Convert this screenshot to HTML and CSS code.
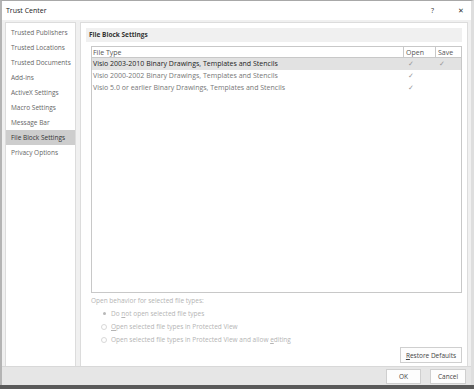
FILE: index.html
```html
<html>
  <head>
    <link rel="stylesheet" href="styles.css">
  </head>
  <body>
    <div class="dialog">
      <div class="titlebar">
        <span class="title">Trust Center</span>
        <span class="help">?</span>
        <span class="close">&#x2715;</span>
      </div>
      <div class="main">
        <div class="nav">
          <div class="nav-item">Trusted Publishers</div>
          <div class="nav-item">Trusted Locations</div>
          <div class="nav-item">Trusted Documents</div>
          <div class="nav-item">Add-ins</div>
          <div class="nav-item">ActiveX Settings</div>
          <div class="nav-item">Macro Settings</div>
          <div class="nav-item">Message Bar</div>
          <div class="nav-item selected">File Block Settings</div>
          <div class="nav-item">Privacy Options</div>
        </div>
        <div class="content">
          <div class="section-head">File Block Settings</div>
          <div class="table">
            <div class="row head">
              <div class="cell type">File Type</div>
              <div class="cell open">Open</div>
              <div class="cell save">Save</div>
            </div>
            <div class="row active">
              <div class="cell type">Visio 2003-2010 Binary Drawings, Templates and Stencils</div>
              <div class="cell open"><span class="tick">&#x2713;</span></div>
              <div class="cell save"><span class="tick">&#x2713;</span></div>
            </div>
            <div class="row">
              <div class="cell type">Visio 2000-2002 Binary Drawings, Templates and Stencils</div>
              <div class="cell open"><span class="tick">&#x2713;</span></div>
              <div class="cell save"></div>
            </div>
            <div class="row">
              <div class="cell type">Visio 5.0 or earlier Binary Drawings, Templates and Stencils</div>
              <div class="cell open"><span class="tick">&#x2713;</span></div>
              <div class="cell save"></div>
            </div>
          </div>
          <div class="behavior">
            <div class="behavior-label">Open behavior for selected file types:</div>
            <div class="radio"><span class="dot checked"></span><span>Do <u>n</u>ot open selected file types</span></div>
            <div class="radio"><span class="dot"></span><span><u>O</u>pen selected file types in Protected View</span></div>
            <div class="radio"><span class="dot"></span><span>Open selected file types in Protected View and allow <u>e</u>diting</span></div>
          </div>
          <div class="restore-row">
            <button class="btn restore"><u>R</u>estore Defaults</button>
          </div>
        </div>
      </div>
      <div class="footer">
        <button class="btn ok">OK</button>
        <button class="btn cancel">Cancel</button>
      </div>
      <div class="shadow"></div>
    </div>
  </body>
</html>
```
FILE: styles.css
```css
html {
  background-color: #f0f0f0;
}
body {
  margin: 0;
  overflow: hidden;
  font-family: "Open Sans", "Noto Sans", sans-serif;
  font-size: 6.5px;
  color: #444;
}
.dialog {
  height: 389px;
  display: flex;
  flex-direction: column;
  border-left: 2px solid #b4b4b4;
  border-right: 3px solid #dedede;
  border-top: 1px solid #a8a8a8;
  box-sizing: border-box;
  background-color: #f0f0f0;
}
.titlebar {
  height: 19px;
  background-color: #fff;
  display: flex;
  align-items: center;
  padding-left: 4px;
  color: #222;
  font-size: 7px;
}
.title {
  flex: 1;
}
.help {
  width: 12px;
  margin-right: 15px;
  color: #333;
}
.close {
  width: 12px;
  margin-right: 1px;
  color: #333;
}
.main {
  flex: 1;
  display: flex;
  padding: 2px 3px 0 3px;
  gap: 4px;
}
.nav {
  width: 69px;
  background-color: #fff;
  border: 1px solid #dcdcdc;
  border-bottom: none;
  padding-top: 2px;
}
.nav-item {
  height: 15px;
  line-height: 15px;
  padding-left: 5px;
  color: #666;
  white-space: nowrap;
}
.nav-item.selected {
  background-color: #cdcdcd;
  color: #333;
}
.content {
  flex: 1;
  min-width: 0;
  background-color: #fff;
  border: 1px solid #dcdcdc;
  border-bottom: none;
  padding: 5px 5px 0 5px;
  display: flex;
  flex-direction: column;
}
.section-head {
  height: 14px;
  line-height: 14px;
  background-color: #f0f0f0;
  font-weight: bold;
  padding-left: 3px;
  color: #333;
}
.table {
  margin: 4px 0 0 5px;
  height: 247px;
  border: 1px solid #c8c8c8;
  box-sizing: border-box;
  font-size: 7px;
}
.row {
  display: flex;
  height: 12px;
  line-height: 12px;
  color: #777;
}
.row.head {
  height: 11px;
  line-height: 11px;
  color: #555;
}
.row.active {
  background-color: #e2e2e2;
  color: #222;
}
.cell.type {
  flex: 1;
  padding-left: 1px;
  white-space: nowrap;
}
.cell.open {
  width: 29px;
  padding-left: 2px;
}
.cell.save {
  width: 23px;
  padding-left: 2px;
}
.row.head .cell.open,
.row.head .cell.save {
  border-left: 1px solid #c8c8c8;
}
.row.head .cell {
  border-bottom: 1px solid #c8c8c8;
}
.tick {
  color: #999;
  font-size: 7px;
  padding-left: 1px;
}
.behavior {
  margin-left: 5px;
  color: #b4b4b4;
  padding-top: 2px;
}
.behavior-label {
  height: 12px;
  line-height: 12px;
}
.radio {
  height: 13px;
  line-height: 13px;
  display: flex;
  align-items: center;
  padding-left: 10px;
}
.dot {
  width: 6px;
  height: 6px;
  border: 1px solid #d8d8d8;
  border-radius: 50%;
  margin-right: 4px;
  box-sizing: border-box;
  display: flex;
  align-items: center;
  justify-content: center;
}
.dot.checked {
  border-color: #fff;
}
.dot.checked::after {
  content: "";
  width: 3px;
  height: 3px;
  border-radius: 50%;
  background-color: #b8b8b8;
}
.restore-row {
  display: flex;
  justify-content: flex-end;
  margin-top: 1px;
}
.btn {
  font-family: "Open Sans", "Noto Sans", sans-serif;
  font-size: 6.5px;
  color: #444;
  background-color: #fdfdfd;
  border: 1px solid #cfcfcf;
  height: 16px;
  padding: 0 4px;
}
.restore {
  width: 62px;
}
.footer {
  height: 18px;
  background-color: #e6e6e6;
  border-top: 1px solid #d8d8d8;
  display: flex;
  justify-content: flex-end;
  align-items: center;
  gap: 9px;
  padding-right: 5px;
}
.ok {
  width: 35px;
  height: 15px;
}
.cancel {
  width: 36px;
  height: 15px;
}
.shadow {
  height: 4px;
  background-color: #5a5a5a;
  margin-left: -2px;
  margin-right: -3px;
}
```
